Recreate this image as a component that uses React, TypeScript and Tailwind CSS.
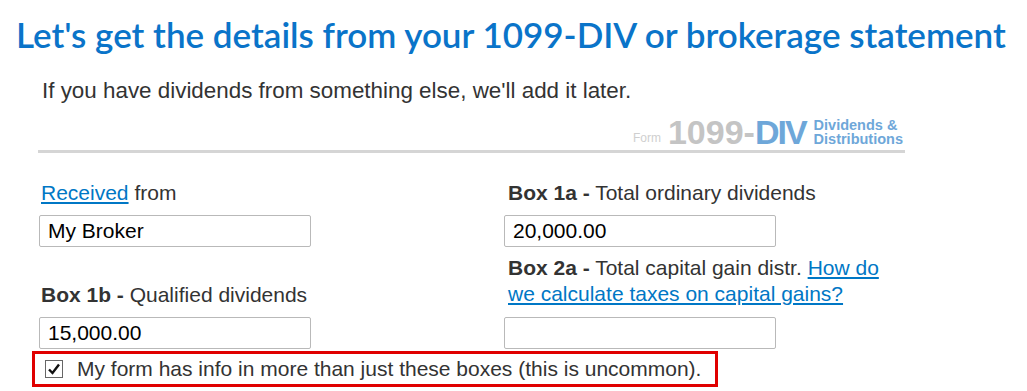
import React from "react";

const Input = ({ value }: { value: string }) => (
  <div className="h-[32px] w-[272px] rounded-[2px] border border-[#b9b9b9] bg-white pl-[8px] text-[21px] leading-[30px] text-black">
    {value}
  </div>
);

export default function App() {
  return (
    <div className="relative h-[391px] w-[1027px] overflow-hidden bg-white font-['Liberation_Sans',Arial,sans-serif] text-[#333]">
      <h1 className="pl-[16px] pt-[12px] font-['Lato',sans-serif] text-[35px] font-semibold leading-[44px] text-[#0a74c9]">
        Let's get the details from your 1099-DIV or brokerage statement
      </h1>
      <div className="ml-[38px] w-[867px]">
        <p className="mt-[22px] pl-[4px] text-[22.4px] leading-[26px]">
          If you have dividends from something else, we'll add it later.
        </p>
        <div className="mt-[14px] flex items-end justify-end pr-[2px]">
          <span className="mb-[2px] mr-[7px] text-[12px] leading-none text-[#cfcfcf]">Form</span>
          <span className="text-[34px] font-bold leading-[28px] text-[#c4c4c4]">1099-</span>
          <span className="text-[34px] font-bold leading-[28px] tracking-[-2px] text-[#6ea7d9]">DIV</span>
          <span className="ml-[8px] flex flex-col text-[14.5px] font-bold leading-[14px] text-[#6ea7d9]">
            <span>Dividends &amp;</span>
            <span>Distributions</span>
          </span>
        </div>
        <div className="mt-[4px] h-[3px] bg-[#d5d5d5]" />
        <div className="mt-[28px] grid grid-cols-[466px_auto] text-[21px] leading-[24px]">
          <div className="pl-[3px]">
            <a href="#" className="text-[#0077c5] underline">Received</a> from
          </div>
          <div className="pl-[4px]">
            <b>Box 1a -</b> Total ordinary dividends
          </div>
          <div className="mt-[10px] pl-[1px]"><Input value="My Broker" /></div>
          <div className="mt-[10px]"><Input value="20,000.00" /></div>
          <div className="self-end pl-[3px]">
            <b>Box 1b -</b> Qualified dividends
          </div>
          <div className="mt-[8px] pl-[4px] leading-[26px]">
            <b>Box 2a -</b> Total capital gain distr.{" "}
            <a href="#" className="text-[#0077c5] underline">How do<br />we calculate taxes on capital gains?</a>
          </div>
          <div className="mt-[10px] pl-[1px]"><Input value="15,000.00" /></div>
          <div className="mt-[10px]"><Input value="" /></div>
        </div>
      </div>
      <div className="ml-[32px] mt-[2px] flex h-[36px] w-[686px] items-center border-[3px] border-[#e00000] pl-[10px] text-[21px]">
        <span className="flex h-[18px] w-[18px] items-center justify-center border border-[#666] bg-white">
          <svg width="14" height="14" viewBox="0 0 14 14"><path d="M2 7.5 L5.5 11 L12 2.5" fill="none" stroke="#111" strokeWidth="2.4" /></svg>
        </span>
        <span className="ml-[14px]">My form has info in more than just these boxes (this is uncommon).</span>
      </div>
    </div>
  );
}
